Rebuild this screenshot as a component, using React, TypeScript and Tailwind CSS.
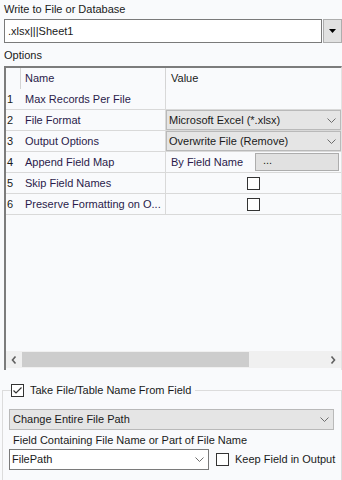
import React from 'react';

function Chevron({ className = '' }: { className?: string }) {
  return (
    <svg width="9" height="5" viewBox="0 0 9 5" className={className}>
      <path d="M0.5 0.5 L4.5 4.5 L8.5 0.5" fill="none" stroke="#6d6d6d" strokeWidth="1" />
    </svg>
  );
}

function Box({ checked = false }: { checked?: boolean }) {
  return (
    <div className="w-[13px] h-[13px] border border-[#333333] bg-white flex items-center justify-center shrink-0">
      {checked && (
        <svg width="11" height="11" viewBox="0 0 11 11">
          <path d="M1.5 5.5 L4 8 L9.5 2.5" fill="none" stroke="#333333" strokeWidth="1.2" />
        </svg>
      )}
    </div>
  );
}

const rows = ['Max Records Per File', 'File Format', 'Output Options', 'Append Field Map', 'Skip Field Names', 'Preserve Formatting on O...'];

function ValueCell({ i }: { i: number }) {
  if (i === 1 || i === 2) {
    return (
      <div className="flex-1 h-full bg-[#e5e5e5] border border-[#b9b9b9] flex items-center pl-[2px] pr-[4px]">
        <span className="flex-1">{i === 1 ? 'Microsoft Excel (*.xlsx)' : 'Overwrite File (Remove)'}</span>
        <Chevron />
      </div>
    );
  }
  if (i === 3) {
    return (
      <div className="flex-1 h-full flex items-center pl-[5px]">
        <span className="w-[84px] text-[#2a1a4a]">By Field Name</span>
        <div className="flex-1 h-[18px] mr-[2px] bg-[#e1e1e1] border border-[#adadad] flex items-center pl-[7px] leading-none pb-[3px]">...</div>
      </div>
    );
  }
  if (i === 4 || i === 5) {
    return (
      <div className="flex-1 h-full flex items-center justify-center">
        <Box />
      </div>
    );
  }
  return <div className="flex-1 h-full" />;
}

export default function App() {
  return (
    <div
      className="w-[342px] h-[480px] overflow-hidden bg-[#f9fafc] text-[11px] text-[#1a1a1a] flex flex-col whitespace-nowrap"
      style={{ fontFamily: '"Liberation Sans", Arial, sans-serif' }}
    >
      <div className="pl-[4px] pt-[2px] h-[19px] leading-[14px] shrink-0">Write to File or Database</div>
      <div className="flex pl-[4px] h-[24px] shrink-0">
        <div className="flex-1 border border-[#7a7a7a] bg-white flex items-center pl-[3px]">.xlsx|||Sheet1</div>
        <div className="w-[19px] ml-[1px] bg-[#e1e1e1] border border-[#adadad] flex items-center justify-center">
          <svg width="7" height="4" viewBox="0 0 7 4">
            <path d="M0 0 L7 0 L3.5 4 Z" fill="#000" />
          </svg>
        </div>
      </div>
      <div className="pl-[4px] pt-[5px] h-[23px] leading-[14px] shrink-0">Options</div>

      <div className="ml-[4px] h-[304px] shrink-0 border-t-2 border-l-2 border-[#7c7c7c] border-r border-r-[#e3e3e3] flex flex-col">
        <div className="flex h-[21px] shrink-0">
          <div className="w-[15px] border-r border-[#d4d4d4]" />
          <div className="w-[145px] border-r border-[#d4d4d4] flex items-center pl-[4px] text-[#2a1a4a]">Name</div>
          <div className="flex-1 flex items-center pl-[5px]">Value</div>
        </div>
        {rows.map((r, i) => (
          <div key={r} className="flex h-[21px] shrink-0 border-b border-[#d9d9d9]">
            <div className="w-[15px] flex items-center pl-[1px]">{i + 1}</div>
            <div className="w-[145px] border-r border-[#d9d9d9] flex items-center pl-[4px] text-[#2a1a4a] overflow-hidden">{r}</div>
            <ValueCell i={i} />
          </div>
        ))}
        <div className="flex-1" />
        <div className="h-[17px] mb-[2px] bg-[#f0f0f0] flex items-center">
          <div className="w-[16px] flex items-center justify-center">
            <svg width="6" height="8" viewBox="0 0 6 8">
              <path d="M4.5 0.5 L1.5 4 L4.5 7.5" fill="none" stroke="#606060" strokeWidth="1.6" />
            </svg>
          </div>
          <div className="w-[227px] h-[15px] bg-[#cdcdcd]" />
          <div className="flex-1" />
          <div className="w-[16px] flex items-center justify-center">
            <svg width="6" height="8" viewBox="0 0 6 8">
              <path d="M1.5 0.5 L4.5 4 L1.5 7.5" fill="none" stroke="#606060" strokeWidth="1.6" />
            </svg>
          </div>
        </div>
      </div>

      <fieldset className="ml-[2px] mt-[13px] border border-[#dcdcdc] h-[200px] shrink-0 px-[6px]">
        <legend className="ml-[2px] pr-[4px] flex items-center gap-[6px] h-[14px]">
          <Box checked />
          <span>Take File/Table Name From Field</span>
        </legend>
        <div className="mt-[12px] h-[21px] bg-[#e5e5e5] border border-[#b9b9b9] flex items-center pl-[3px] pr-[4px] mr-[1px]">
          <span className="flex-1">Change Entire File Path</span>
          <Chevron />
        </div>
        <div className="pl-[4px] pt-[3px] h-[19px] leading-[14px]">Field Containing File Name or Part of File Name</div>
        <div className="flex items-center h-[21px]">
          <div className="w-[200px] h-full bg-white border border-[#7a7a7a] flex items-center pl-[2px] pr-[4px]">
            <span className="flex-1">FilePath</span>
            <Chevron />
          </div>
          <div className="ml-[7px] flex items-center gap-[6px]">
            <Box />
            <span>Keep Field in Output</span>
          </div>
        </div>
      </fieldset>
    </div>
  );
}
